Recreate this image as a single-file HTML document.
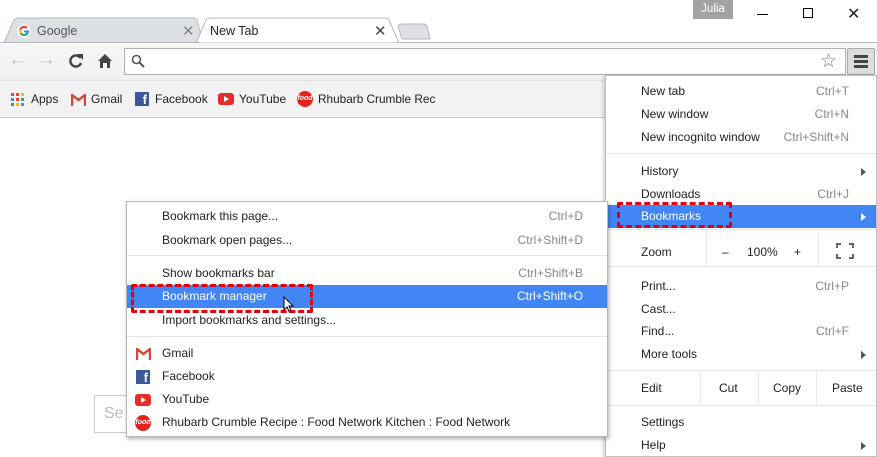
<!DOCTYPE html>
<html><head><style>
*{margin:0;padding:0;box-sizing:border-box}
body{width:877px;height:457px;overflow:hidden;position:relative;background:#fff;font-family:"Liberation Sans",sans-serif;font-size:12px;color:#222}
.a{position:absolute}
.mi{position:absolute;left:0;right:0;height:23px;line-height:23px}
.mi .t{position:absolute;left:35px}
.mi .s{position:absolute;right:27px;color:#888}
.sep{position:absolute;left:0;right:0;height:1px;background:#e6e6e6}
.arr{position:absolute;right:10px;top:8px;width:0;height:0;border-left:5px solid #555;border-top:4px solid transparent;border-bottom:4px solid transparent}
.sm .t{left:35px}
.sm .s{right:24px}
.hl{background:#4285f4;color:#fff}
.hl .s{color:#fff}
.dash{position:absolute;border:3px dashed #e00010;border-radius:2px}
.bk{position:absolute;top:91px;height:16px;line-height:16px;font-size:12px}
</style></head><body>
<div class="a" style="left:0;top:42px;width:877px;height:1px;background:#c8c8c8"></div>
<svg class="a" style="left:0;top:17px" width="440" height="27">
<path d="M4 26 L14 3 Q16 1 19 1 L193 1 Q196 1 197 3 L203 26Z" fill="#dde1e6" stroke="#b5b8bd"/>
<path d="M196 26 L206 3 Q208 1 211 1 L385 1 Q388 1 389 3 L399 26Z" fill="#fff" stroke="#b5b8bd"/>
<path d="M398 9 Q399 7 402 7 L423 7 Q426 7 427 9 L430 22 L402 22Z" fill="#dde1e6" stroke="#b5b8bd"/>
</svg>
<div class="a" style="left:0;top:42px;width:200px;height:1px;background:#b5b8bd"></div>
<div class="a" style="left:396px;top:42px;width:481px;height:1px;background:#b5b8bd"></div>
<svg class="a" style="left:17px;top:24px" width="14" height="14" viewBox="0 0 14 14"><circle cx="7" cy="7" r="6.5" fill="#fff"/><path d="M7 3 A4 4 0 1 0 11 7.5 L7 7.5" stroke="#4285f4" stroke-width="2" fill="none"/><path d="M10 4.2 A4 4 0 0 0 3.5 5" stroke="#ea4335" stroke-width="2" fill="none"/><path d="M3.2 5.5 A4 4 0 0 0 4 9.5" stroke="#fbbc05" stroke-width="2" fill="none"/><path d="M4 9.5 A4 4 0 0 0 10.5 9.3" stroke="#34a853" stroke-width="2" fill="none"/></svg>
<div class="a" style="left:37px;top:24px;color:#555;font-size:12.5px">Google</div>
<div class="a" style="left:182px;top:22px;color:#888;font-size:15px">✕</div>
<div class="a" style="left:210px;top:24px;color:#222;font-size:12.5px">New Tab</div>
<div class="a" style="left:374px;top:22px;color:#444;font-size:15px">✕</div>
<div class="a" style="left:693px;top:0;width:40px;height:19px;background:#a3a3a3;color:#fff;text-align:center;line-height:19px;font-size:11.5px">Julia</div>
<div class="a" style="left:757px;top:14px;width:11px;height:1px;background:#000"></div>
<div class="a" style="left:803px;top:8px;width:10px;height:10px;border:1px solid #000"></div>
<div class="a" style="left:847px;top:4px;font-size:16px">✕</div>
<div class="a" style="left:0;top:43px;width:877px;height:37px;background:linear-gradient(#f7f7f7,#f1f1f1)"></div>
<div class="a" style="left:8px;top:50px;font-size:19px;color:#bbb;line-height:20px">←</div>
<div class="a" style="left:37px;top:50px;font-size:19px;color:#bbb;line-height:20px">→</div>
<svg class="a" style="left:68px;top:53px" width="16" height="16"><path d="M12.5 5 A5.5 5.5 0 1 0 13 10" stroke="#444" stroke-width="2.4" fill="none"/><path d="M9 1 L15 1 L15 7Z" fill="#444"/></svg>
<svg class="a" style="left:97px;top:53px" width="16" height="16"><path d="M1 8 L8 1 L15 8 L13 8 L13 15 L10 15 L10 10 L6 10 L6 15 L3 15 L3 8Z" fill="#444"/></svg>
<div class="a" style="left:124px;top:48px;width:722px;height:27px;background:#fff;border:1px solid #b0b0b0"></div>
<svg class="a" style="left:131px;top:54px" width="14" height="14"><circle cx="5.5" cy="5.5" r="4" stroke="#555" stroke-width="1.6" fill="none"/><path d="M8.5 8.5 L13 13" stroke="#555" stroke-width="2"/></svg>
<div class="a" style="left:820px;top:50px;font-size:19px;color:#777">☆</div>
<div class="a" style="left:847px;top:48px;width:28px;height:27px;background:#ddd;border:1px solid #aaa;border-radius:2px"></div>
<div class="a" style="left:854px;top:55px;width:14px;height:3px;background:#444;box-shadow:0 5px 0 #444,0 10px 0 #444"></div>
<div class="a" style="left:0;top:80px;width:877px;height:38px;background:#f2f2f2;border-bottom:1px solid #ccc;border-top:1px solid #e0e0e0"></div>
<svg class="a" style="left:11px;top:93px" width="13" height="13"><g><rect x="0" y="0" width="3" height="3" fill="#ea4335"/><rect x="5" y="0" width="3" height="3" fill="#ea4335"/><rect x="10" y="0" width="3" height="3" fill="#fbbc05"/><rect x="0" y="5" width="3" height="3" fill="#4285f4"/><rect x="5" y="5" width="3" height="3" fill="#ea4335"/><rect x="10" y="5" width="3" height="3" fill="#34a853"/><rect x="0" y="10" width="3" height="3" fill="#34a853"/><rect x="5" y="10" width="3" height="3" fill="#fbbc05"/><rect x="10" y="10" width="3" height="3" fill="#4285f4"/></g></svg>
<div class="bk" style="left:31px">Apps</div>
<svg class="a" style="left:71px;top:94px" width="15" height="12"><path d="M1 12 L1 1 L7.5 6 L14 1 L14 12" stroke="#d44638" stroke-width="2.4" fill="none"/></svg>
<div class="bk" style="left:91px">Gmail</div>
<div class="a" style="left:135px;top:92px;width:14px;height:14px;background:#3b5998;color:#fff;font-weight:bold;font-size:13px;line-height:16px;text-align:right;padding-right:2px">f</div>
<div class="bk" style="left:155px">Facebook</div>
<div class="a" style="left:218px;top:93px;width:16px;height:12px;background:#e52d27;border-radius:3px"></div>
<div class="a" style="left:224px;top:96px;border-left:5px solid #fff;border-top:3px solid transparent;border-bottom:3px solid transparent"></div>
<div class="bk" style="left:239px">YouTube</div>
<div class="a" style="left:297px;top:91px;width:16px;height:16px;border-radius:50%;background:#e4231b;color:#fff;font-size:7px;line-height:16px;text-align:center;font-style:italic;font-weight:bold">food</div>
<div class="bk" style="left:318px;font-size:11.8px">Rhubarb Crumble Rec</div>
<div class="a" style="left:94px;top:395px;width:40px;height:38px;border:1px solid #ccc;color:#bbb;font-size:16px;line-height:36px;padding-left:9px">Se</div>
<div class="a" style="left:605px;top:75px;width:272px;height:382px;background:#fff;border:1px solid #c0c0c0;box-shadow:-1px 1px 4px rgba(0,0,0,.25)">
<div class="mi" style="top:4px"><span class="t">New tab</span><span class="s">Ctrl+T</span></div>
<div class="mi" style="top:27px"><span class="t">New window</span><span class="s">Ctrl+N</span></div>
<div class="mi" style="top:50px"><span class="t">New incognito window</span><span class="s">Ctrl+Shift+N</span></div>
<div class="sep" style="top:77px"></div>
<div class="mi" style="top:84px"><span class="t">History</span><span class="arr"></span></div>
<div class="mi" style="top:107px"><span class="t">Downloads</span><span class="s">Ctrl+J</span></div>
<div class="mi hl" style="top:129px"><span class="t">Bookmarks</span><span class="arr" style="border-left-color:#fff"></span></div>
<div class="sep" style="top:153px"></div>
<div class="mi" style="top:165px"><span class="t">Zoom</span></div>
<div class="a" style="left:100px;top:154px;width:1px;height:36px;background:#e6e6e6"></div>
<div class="a" style="left:212px;top:154px;width:1px;height:36px;background:#e6e6e6"></div>
<div class="a" style="left:116px;top:165px;line-height:23px">–</div>
<div class="a" style="left:141px;top:165px;line-height:23px">100%</div>
<div class="a" style="left:188px;top:165px;line-height:23px">+</div>
<svg class="a" style="left:230px;top:167px" width="18" height="16"><path d="M1 5 V1 H5 M13 1 H17 V5 M17 11 V15 H13 M5 15 H1 V11" stroke="#666" stroke-width="2" fill="none"/></svg>
<div class="sep" style="top:190px"></div>
<div class="mi" style="top:199px"><span class="t">Print...</span><span class="s">Ctrl+P</span></div>
<div class="mi" style="top:222px"><span class="t">Cast...</span></div>
<div class="mi" style="top:244px"><span class="t">Find...</span><span class="s">Ctrl+F</span></div>
<div class="mi" style="top:267px"><span class="t">More tools</span><span class="arr"></span></div>
<div class="sep" style="top:294px"></div>
<div class="mi" style="top:301px"><span class="t">Edit</span></div>
<div class="a" style="left:94px;top:295px;width:1px;height:34px;background:#e6e6e6"></div>
<div class="a" style="left:152px;top:295px;width:1px;height:34px;background:#e6e6e6"></div>
<div class="a" style="left:210px;top:295px;width:1px;height:34px;background:#e6e6e6"></div>
<div class="a" style="left:113px;top:301px;line-height:23px">Cut</div>
<div class="a" style="left:167px;top:301px;line-height:23px">Copy</div>
<div class="a" style="left:226px;top:301px;line-height:23px">Paste</div>
<div class="sep" style="top:329px"></div>
<div class="mi" style="top:335px"><span class="t">Settings</span></div>
<div class="mi" style="top:358px"><span class="t">Help</span><span class="arr"></span></div>
</div>
<div class="a sm" style="left:126px;top:201px;width:482px;height:236px;background:#fff;border:1px solid #b8b8b8;box-shadow:1px 2px 4px rgba(0,0,0,.3)">
<div class="mi sm" style="top:3px"><span class="t">Bookmark this page...</span><span class="s">Ctrl+D</span></div>
<div class="mi sm" style="top:27px"><span class="t">Bookmark open pages...</span><span class="s">Ctrl+Shift+D</span></div>
<div class="sep" style="top:53px"></div>
<div class="mi sm" style="top:60px"><span class="t">Show bookmarks bar</span><span class="s">Ctrl+Shift+B</span></div>
<div class="mi sm hl" style="top:83px"><span class="t">Bookmark manager</span><span class="s">Ctrl+Shift+O</span></div>
<div class="mi sm" style="top:107px"><span class="t">Import bookmarks and settings...</span></div>
<div class="sep" style="top:134px"></div>
<div class="mi sm" style="top:140px"><span class="t">Gmail</span></div>
<div class="mi sm" style="top:163px"><span class="t">Facebook</span></div>
<div class="mi sm" style="top:186px"><span class="t">YouTube</span></div>
<div class="mi sm" style="top:209px"><span class="t">Rhubarb Crumble Recipe : Food Network Kitchen : Food Network</span></div>
<svg class="a" style="left:9px;top:146px" width="15" height="12"><path d="M1 12 L1 1 L7.5 6 L14 1 L14 12" stroke="#d44638" stroke-width="2.4" fill="none"/></svg>
<div class="a" style="left:9px;top:168px;width:14px;height:14px;background:#3b5998;color:#fff;font-weight:bold;font-size:13px;line-height:16px;text-align:right;padding-right:2px">f</div>
<div class="a" style="left:8px;top:192px;width:16px;height:12px;background:#e52d27;border-radius:3px"></div>
<div class="a" style="left:14px;top:195px;border-left:5px solid #fff;border-top:3px solid transparent;border-bottom:3px solid transparent"></div>
<div class="a" style="left:8px;top:213px;width:16px;height:16px;border-radius:50%;background:#e4231b;color:#fff;font-size:7px;line-height:16px;text-align:center;font-style:italic;font-weight:bold">food</div>
</div>
<svg class="a" style="left:283px;top:296px" width="12" height="18"><path d="M1 1 L1 14 L4 11 L6.5 16.5 L8.5 15.5 L6 10 L10 10Z" fill="#fff" stroke="#000"/></svg>
<div class="dash" style="left:617px;top:202px;width:115px;height:26px"></div>
<div class="dash" style="left:131px;top:284px;width:182px;height:29px"></div>
</body></html>
